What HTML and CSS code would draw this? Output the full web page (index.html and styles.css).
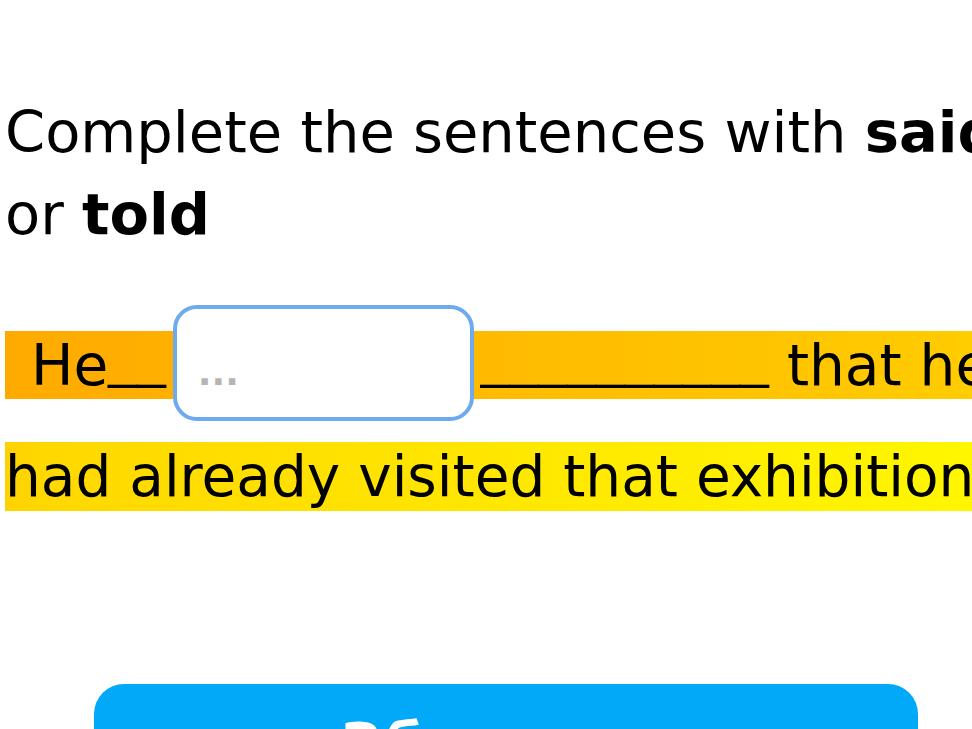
FILE: index.html
```html
<!DOCTYPE html>
<html lang="en">
<head>
<meta charset="utf-8">
<title>Complete the sentences</title>
<link rel="stylesheet" href="styles.css">
</head>
<body>
<main class="page">
  <h1 class="prompt">Complete the sentences with <b>said</b> or <b>told</b></h1>
  <p class="sentence"><span class="hl">&nbsp;He<span class="gap">__</span><input class="blank" type="text" placeholder="..."><span class="gap">__________</span> that he had already visited that exhibition.</span></p>
  <div class="actions">
    <button class="save" type="button">Зберегти</button>
  </div>
</main>
</body>
</html>
```

FILE: styles.css
```css
html, body {
  margin: 0;
  padding: 0;
  overflow: hidden;
  background: #ffffff;
}

.page {
  width: 1040px;
  padding: 0 0 0 5px;
  font-family: "DejaVu Sans", "Liberation Sans", sans-serif;
  color: #000000;
}

.prompt {
  margin: 92px 0 0 0;
  font-size: 57.5px;
  line-height: 82px;
  font-weight: normal;
}

.prompt b {
  font-weight: bold;
}

.sentence {
  margin: 49px 0 0 0;
  font-size: 56.5px;
  line-height: 87px;
}

.hl {
  padding: 1.6px 0 1.6px 8px;
  background: linear-gradient(to right, #ffaa00 0%, #ffcb00 48%, #ffd800 52%, #fff700 100%);
}

.gap {
  font-family: "Liberation Sans", sans-serif;
  font-size: 51.8px;
  vertical-align: 7px;
}

.blank {
  box-sizing: border-box;
  width: 301px;
  height: 116px;
  margin: 0 7px 12px 7px;
  padding: 18px 20px 0 21px;
  vertical-align: middle;
  border: 4px solid #6eaaee;
  border-radius: 24px;
  background: #ffffff;
  font-family: "DejaVu Sans", sans-serif;
  font-size: 36px;
  font-weight: bold;
  color: #333333;
  outline: none;
}

.blank::placeholder {
  color: #b5b5b5;
}

.actions {
  margin-top: 164px;
}

.save {
  display: block;
  box-sizing: border-box;
  width: 824px;
  height: 120px;
  margin-left: 89px;
  padding: 1px 0 0 0;
  border: none;
  border-radius: 30px;
  background: #01a9f8;
  color: #ffffff;
  font-family: "DejaVu Sans", sans-serif;
  font-size: 58px;
  font-weight: bold;
  letter-spacing: 3px;
  line-height: normal;
  text-align: center;
  vertical-align: top;
}
```
